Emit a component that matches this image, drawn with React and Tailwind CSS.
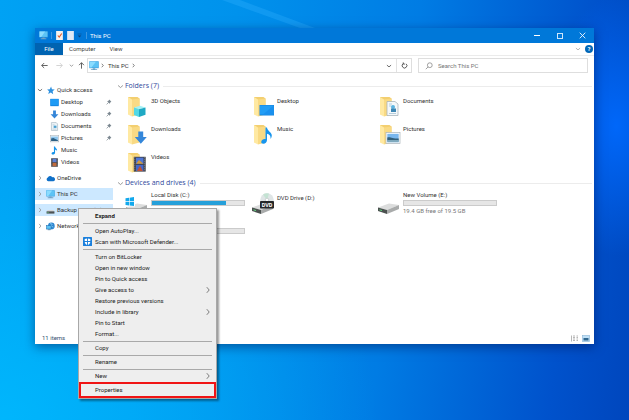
import React, { useState } from "react";

const quickAccess = [
  { name: "Desktop", icon: "desktop", pinned: true },
  { name: "Downloads", icon: "downloads", pinned: true },
  { name: "Documents", icon: "documents", pinned: true },
  { name: "Pictures", icon: "pictures", pinned: true },
  { name: "Music", icon: "music", pinned: false },
  { name: "Videos", icon: "videos", pinned: false },
];

const roots = [
  { name: "OneDrive", icon: "onedrive", selected: false },
  { name: "This PC", icon: "pc", selected: true },
  { name: "Backup Drive (F:)", icon: "drive", selected: true },
  { name: "Network", icon: "network", selected: false },
];

const folders = [
  { name: "3D Objects", icon: "objects" },
  { name: "Desktop", icon: "desktop" },
  { name: "Documents", icon: "documents" },
  { name: "Downloads", icon: "downloads" },
  { name: "Music", icon: "music" },
  { name: "Pictures", icon: "pictures" },
  { name: "Videos", icon: "videos" },
];

const drives = [
  { name: "Local Disk (C:)", kind: "system", used: 80 },
  { name: "DVD Drive (D:)", kind: "dvd" },
  { name: "New Volume (E:)", kind: "disk", used: 0, free: "19.4 GB free of 19.5 GB" },
  { name: "Backup Drive (F:)", kind: "disk", used: 0 },
];

// each inner array is a block between two separators
const menuGroups = [
  [{ label: "Expand", bold: true }],
  [{ label: "Open AutoPlay..." }, { label: "Scan with Microsoft Defender...", shield: true }],
  [
    { label: "Turn on BitLocker" },
    { label: "Open in new window" },
    { label: "Pin to Quick access" },
    { label: "Give access to", sub: true },
    { label: "Restore previous versions" },
    { label: "Include in library", sub: true },
    { label: "Pin to Start" },
    { label: "Format..." },
  ],
];

const shortGroups = [{ label: "Copy" }, { label: "Rename" }, { label: "New", sub: true }];

function Chevron({ dir = "right", className = "" }) {
  const d = dir === "right" ? "M3.5 1.5 L6.5 5 L3.5 8.5" : "M1.5 3.5 L5 6.5 L8.5 3.5";
  return (
    <svg viewBox="0 0 10 10" className={"shrink-0 " + className} fill="none" stroke="currentColor" strokeWidth="1.2" aria-hidden="true">
      <path d={d} />
    </svg>
  );
}

function PcIcon({ className }) {
  return (
    <svg viewBox="0 0 16 16" className={className} aria-hidden="true">
      <rect x="0.5" y="0.5" width="15" height="11" fill="#3a9adb" />
      <rect x="1" y="1" width="14" height="9.5" fill="#5cc3f5" />
      <path d="M1 1 H11 L4 10.5 H1 Z" fill="#8adcff" />
      <path d="M6 11.5 H10 V13 H13 V14.5 H3 V13 H6 Z" fill="#6fa3c6" />
    </svg>
  );
}

function SmallIcon({ name }) {
  const cls = "h-[9px] w-[9px] shrink-0";
  if (name === "pc") return <PcIcon className={cls} />;
  return (
    <svg viewBox="0 0 16 16" className={cls} aria-hidden="true">
      {name === "star" && (
        <path d="M9 1 L10.6 5.6 L15.5 6 L11.8 9.2 L12.8 14.5 L8.6 11.6 L4 14.4 L5.4 9.4 L2 6.2 L6.8 5.6 Z" fill="#2f92e0" />
      )}
      {name === "desktop" && (
        <>
          <rect x="0.5" y="1.5" width="15" height="13" fill="#1280dc" />
          <rect x="1" y="2" width="14" height="11" fill="#1e9bf5" />
        </>
      )}
      {name === "downloads" && <path d="M5.5 1 H10.5 V7.5 H15 L8 15 L1 7.5 H5.5 Z" fill="#3586d8" />}
      {name === "documents" && (
        <>
          <path d="M2.5 1 H11 L13.5 3.5 V15 H2.5 Z" fill="#eef4f8" stroke="#9aabb8" />
          <path d="M4.5 5 H8 M4.5 12.5 H11.5" stroke="#9db9cc" />
          <rect x="6.5" y="6.5" width="5" height="4" fill="#4aa0d0" />
        </>
      )}
      {name === "pictures" && (
        <>
          <rect x="0.5" y="3" width="15" height="11" fill="#f4f7f9" stroke="#a7b1b8" />
          <rect x="2" y="4.5" width="12" height="8" fill="#8cc5ee" />
          <path d="M2 8 L6 7 L14 11 V12.5 H2 Z" fill="#2c5f83" />
        </>
      )}
      {name === "music" && (
        <path d="M7 1 H9 C9 4 13.5 4.5 12.5 9.5 C12 7.5 10.5 6.8 9 6.8 V12 C9 14 7.2 15.3 5.3 15.3 C3.6 15.3 2.6 14.4 2.8 13 C3 11.4 5 10.3 7 10.7 Z" fill="#1593ea" />
      )}
      {name === "videos" && (
        <>
          <rect x="2" y="0.5" width="12" height="15" fill="#3d3f45" />
          <rect x="4.5" y="1.5" width="7" height="6" fill="#5d82d8" />
          <rect x="4.5" y="8.5" width="7" height="6" fill="#c06a3c" />
          <path d="M3.2 1 V15 M12.8 1 V15" stroke="#a9adb4" strokeWidth="1" strokeDasharray="1.2 1.2" />
        </>
      )}
      {name === "onedrive" && (
        <path d="M4 13 A3.6 3.6 0 0 1 3.2 6.2 A4.5 4.5 0 0 1 11 5.6 A3.8 3.8 0 0 1 13.2 13 Z" fill="#1070c8" />
      )}
      {name === "drive" && (
        <>
          <path d="M3 7 H13 L15 10 H1 Z" fill="#d5d8da" />
          <rect x="1" y="9.5" width="14" height="4" fill="#4c5254" />
          <rect x="2" y="11" width="3" height="1" fill="#5fcf7c" />
        </>
      )}
      {name === "network" && (
        <>
          <circle cx="9.5" cy="7" r="6" fill="#2e86d0" />
          <path d="M7 2.5 L11 4 L9 7 L13 9" stroke="#8fd0f5" strokeWidth="1.4" fill="none" />
          <rect x="1" y="6.5" width="8" height="6" fill="#5cc3f5" stroke="#1e6fb2" />
          <rect x="3" y="13" width="5" height="1.5" fill="#4a7ea8" />
        </>
      )}
    </svg>
  );
}

function FolderIcon({ name }) {
  return (
    <svg viewBox="0 0 26 22" className="h-[22px] w-[26px] shrink-0" aria-hidden="true">
      <path d="M3 1 H12.5 L14.5 2.5 V18 L7 19 L3 18 Z" fill="#f3cf70" />
      <path d="M3 1 L7 3.5 V20.5 L3 18.5 Z" fill="#ffe9a2" />
      <path d="M7 3.5 L14.5 2.5 V18.5 L7 20.5 Z" fill="#f9da84" />
      {name === "objects" && (
        <>
          <path d="M9 11.5 L15 9.8 L20.5 11.5 L14 13.2 Z" fill="#a5f1f5" />
          <path d="M9 11.5 L14 13.2 V21 L9 19 Z" fill="#53d9e6" />
          <path d="M14 13.2 L20.5 11.5 V18.8 L14 21 Z" fill="#1fa9c4" />
        </>
      )}
      {name === "desktop" && (
        <>
          <rect x="8.5" y="9" width="14.5" height="10.5" fill="#1683dd" />
          <rect x="9" y="9.5" width="13.5" height="9" fill="#229df5" />
          <path d="M22.5 9.5 V18.5 H12 Z" fill="#1a90ee" />
        </>
      )}
      {name === "documents" && (
        <>
          <path d="M10 5.5 H18 L21 8 V19.5 H10 Z" fill="#f4f8fa" stroke="#a1adb5" strokeWidth="0.7" />
          <path d="M12 8 H15 M12 10 H14 M12 17.5 H19" stroke="#a6c3d6" strokeWidth="0.8" />
          <circle cx="16" cy="11" r="2" fill="#5bb4e0" />
          <rect x="14" y="12.5" width="5" height="3.5" fill="#3d86b4" />
        </>
      )}
      {name === "downloads" && <path d="M13.3 7.5 H18.2 V13 H21.8 L15.8 19.8 L9.8 13 H13.3 Z" fill="#3487da" />}
      {name === "music" && (
        <path d="M14.5 3.5 H16 C16.3 7 21 8.5 20.8 11.5 C20.7 13 20.2 14 19.5 15 C20 11.5 18 10.2 16 9.8 V16 C16 18.3 14.2 19.8 12.5 19.8 C10.9 19.8 10 18.8 10.3 17.5 C10.6 15.8 12.6 14.7 14.5 15.1 Z" fill="#1795ee" />
      )}
      {name === "pictures" && (
        <>
          <rect x="9" y="8.5" width="14" height="11" fill="#fff" stroke="#a7b1b8" strokeWidth="0.7" />
          <rect x="10.3" y="9.8" width="11.4" height="8.4" fill="#79b7ee" />
          <path d="M10.3 13.5 C13 12.3 15 14.4 21.7 14.6 V16.4 H10.3 Z" fill="#33607a" />
          <rect x="10.3" y="16" width="11.4" height="2.2" fill="#7fa9bd" />
        </>
      )}
      {name === "videos" && (
        <>
          <rect x="8.8" y="4.8" width="11.9" height="14.8" fill="#3b3d44" />
          <rect x="11" y="5.6" width="7.5" height="6.2" fill="#4f76d6" />
          <path d="M11 11.8 L14 8 L18.5 11.8 Z" fill="#d39a3a" />
          <rect x="11" y="12.8" width="7.5" height="6.2" fill="#4468c9" />
          <path d="M12 19 L15 13.8 L17.8 19 Z" fill="#c4512f" />
          <path d="M9.8 5.3 V19.3 M19.7 5.3 V19.3" stroke="#a9adb4" strokeWidth="0.8" strokeDasharray="1 1" />
        </>
      )}
    </svg>
  );
}

function DriveIcon({ kind }) {
  return (
    <svg viewBox="0 0 26 24" className="h-[24px] w-[26px] shrink-0" aria-hidden="true">
      {kind === "dvd" && (
        <>
          <circle cx="16" cy="9" r="6.8" fill="#dfe5e6" />
          <path d="M16 9 L12 3.5 A6.8 6.8 0 0 1 18 2.5 Z" fill="#c4e3d3" />
          <circle cx="16" cy="9" r="1.8" fill="#fff" stroke="#b5bcbe" strokeWidth="0.6" />
        </>
      )}
      <path d="M1 16.5 L12 12.5 L22 14 L10 19 Z" fill="#dcdddd" />
      <path d="M1 16.5 L10 19 V23 L1 20 Z" fill="#4b514f" />
      <path d="M10 19 L22 14 V18 L10 23 Z" fill="#a9abab" />
      <path d="M2.5 18.8 L5 19.6" stroke="#5fcf7c" strokeWidth="1" />
      {kind === "system" && (
        <>
          <rect x="0" y="5.5" width="10" height="10" fill="#fff" />
          <path d="M0.5 7.3 L4 6.8 V10.3 H0.5 Z M4.6 6.7 L9 6 V10.3 H4.6 Z M0.5 10.9 H4 V14.4 L0.5 13.9 Z M4.6 10.9 H9 V15.1 L4.6 14.5 Z" fill="#12a8ec" />
        </>
      )}
      {kind === "dvd" && (
        <>
          <rect x="9" y="10" width="14" height="7.5" rx="0.8" fill="#25282a" />
          <text x="16" y="15.8" textAnchor="middle" fontSize="5.5" fontWeight="700" fill="#fff">DVD</text>
        </>
      )}
    </svg>
  );
}

function Pin() {
  return (
    <svg viewBox="0 0 10 10" className="h-[6px] w-[6px] shrink-0 text-[#7b8790]" aria-hidden="true">
      <path d="M5.5 1 L9 4.5 L7.8 5 L6 8 L2 4 L5 2.2 Z" fill="currentColor" />
      <path d="M3.8 6.2 L1 9" stroke="currentColor" strokeWidth="1.2" />
    </svg>
  );
}

function TitleBar() {
  return (
    <header className="flex h-[15px] items-center bg-[#0078d9] pl-1 text-white">
      <PcIcon className="h-[9px] w-[9px]" />
      <span className="ml-[3px] h-[7px] w-px bg-[#3d97e0]" />
      <svg viewBox="0 0 12 16" className="ml-1 h-[9px] w-[7px]" aria-hidden="true">
        <rect width="12" height="16" fill="#f5f1ee" />
        <path d="M3 8 L5.5 11 L10 4.5" stroke="#e0592a" strokeWidth="2" fill="none" />
      </svg>
      <svg viewBox="0 0 12 16" className="ml-1 h-[9px] w-[7px]" aria-hidden="true">
        <path d="M0 0 H12 V16 H0 Z" fill="#dfe9f5" />
      </svg>
      <svg viewBox="0 0 10 10" className="ml-[3px] h-[5px] w-[5px] text-[#0b447c]" aria-hidden="true">
        <path d="M1 2 H9" stroke="currentColor" />
        <path d="M1.5 5 H8.5 L5 9 Z" fill="currentColor" />
      </svg>
      <span className="ml-1 h-[7px] w-px bg-[#3d97e0]" />
      <h1 className="ml-[3px]">This PC</h1>
      <div className="ml-auto flex">
        <button aria-label="Minimize" className="flex h-[15px] w-[23px] items-center justify-center">
          <span className="h-px w-[6px] bg-white" />
        </button>
        <button aria-label="Maximize" className="flex h-[15px] w-[23px] items-center justify-center">
          <span className="h-[6px] w-[6px] border border-[#cfe6fa]" />
        </button>
        <button aria-label="Close" className="flex h-[15px] w-[23px] items-center justify-center">
          <svg viewBox="0 0 10 10" className="h-[7px] w-[7px]" stroke="currentColor" strokeWidth="1.2">
            <path d="M1 1 L9 9 M9 1 L1 9" />
          </svg>
        </button>
      </div>
    </header>
  );
}

function Toolbar({ query, setQuery }) {
  return (
    <div className="flex items-center border-t border-[#ebebeb] pt-[2px] pr-[6px] pl-[2px] text-[#444]">
      <button aria-label="Back" className="flex w-[15px] justify-center">
        <svg viewBox="0 0 10 10" className="h-[7px] w-[7px]" fill="none" stroke="#555" strokeWidth="1.3">
          <path d="M9.5 5 H1 M4.5 1.5 L1 5 L4.5 8.5" />
        </svg>
      </button>
      <button aria-label="Forward" className="flex w-[15px] justify-center">
        <svg viewBox="0 0 10 10" className="h-[7px] w-[7px]" fill="none" stroke="#cfcfcf" strokeWidth="1.3">
          <path d="M0.5 5 H9 M5.5 1.5 L9 5 L5.5 8.5" />
        </svg>
      </button>
      <button aria-label="Recent locations" className="flex w-[8px] justify-center">
        <Chevron dir="down" className="h-[5px] w-[5px] text-[#666]" />
      </button>
      <button aria-label="Up" className="flex w-[12px] justify-center">
        <svg viewBox="0 0 10 10" className="h-[7px] w-[7px]" fill="none" stroke="#555" strokeWidth="1.3">
          <path d="M5 9.5 V1 M1.5 4.5 L5 1 L8.5 4.5" />
        </svg>
      </button>
      <div className="flex h-[15px] flex-1 items-center border border-[#dedede] pl-px text-[#333]">
        <PcIcon className="h-[10px] w-[10px]" />
        <Chevron className="ml-px h-[5px] w-[5px]" />
        <a href="#this-pc" className="ml-[3px]">This PC</a>
        <Chevron className="ml-[2px] h-[5px] w-[5px]" />
        <button aria-label="Previous locations" className="ml-auto flex w-[14px] justify-center">
          <Chevron dir="down" className="h-[6px] w-[6px]" />
        </button>
        <button aria-label="Refresh" className="flex h-full w-[15px] items-center justify-center border-l border-[#e2e2e2]">
          <svg viewBox="0 0 10 10" className="h-[7px] w-[7px]" fill="none" stroke="#444" strokeWidth="1.2">
            <path d="M7.2 2.6 A3.4 3.4 0 1 1 3.4 2.2 M3.2 0.6 V3 H5.6" />
          </svg>
        </button>
      </div>
      <label className="ml-[6px] flex h-[15px] w-[170px] items-center border border-[#dedede] pl-[6px]">
        <svg viewBox="0 0 10 10" className="h-[8px] w-[8px] shrink-0" fill="none" stroke="#8a8a8a" strokeWidth="1">
          <circle cx="6" cy="4" r="3" />
          <path d="M3.8 6.2 L1 9" />
        </svg>
        <input
          aria-label="Search This PC"
          placeholder="Search This PC"
          value={query}
          onChange={(e) => setQuery(e.target.value)}
          className="ml-[5px] min-w-0 flex-1 bg-transparent outline-none placeholder:text-[#757575]"
        />
      </label>
    </div>
  );
}

function Sidebar() {
  return (
    <nav className="w-[78px] shrink-0 pt-[9px] text-[#333]">
      <a href="#quick" className="flex h-[12px] items-center pl-[2px] whitespace-nowrap">
        <Chevron dir="down" className="h-[6px] w-[6px] text-[#444]" />
        <span className="ml-[3px] flex items-center gap-[2px]">
          <SmallIcon name="star" />
          Quick access
        </span>
      </a>
      {quickAccess.map((item) => (
        <a key={item.name} href={"#" + item.icon} className="flex h-[12px] items-center gap-[2px] pr-[1px] pl-[15px]">
          <SmallIcon name={item.icon} />
          <span className="flex-1">{item.name}</span>
          {item.pinned && <Pin />}
        </a>
      ))}
      <div className="mt-1 flex flex-col gap-1">
        {roots.map((item) => (
          <a
            key={item.name}
            href={"#" + item.icon}
            className={
              "flex h-[12px] items-center overflow-hidden pl-[2px] whitespace-nowrap " + (item.selected ? "bg-[#cce8ff]" : "")
            }
          >
            <Chevron className="h-[6px] w-[6px] text-[#8a8a8a]" />
            <span className="ml-[3px] flex items-center gap-[2px]">
              <SmallIcon name={item.icon} />
              {item.name}
            </span>
          </a>
        ))}
      </div>
    </nav>
  );
}

function SectionTitle({ children }) {
  return (
    <div className="flex h-[10px] items-center pl-1 text-[#2f4a9c]">
      <Chevron dir="down" className="h-[7px] w-[7px] text-[#888]" />
      <h2 className="ml-px font-['Open_Sans','Noto_Sans',sans-serif] text-[7px] leading-[10px]">{children}</h2>
      <span className="ml-1 h-px flex-1 bg-[#ececec]" />
    </div>
  );
}

function Usage({ value }) {
  return (
    <div className="my-px h-[6px] w-[94px] border border-[#cbcbcb] bg-[#e6e6e6]">
      <div className="h-full bg-[#26a0da]" style={{ width: value + "%" }} />
    </div>
  );
}

function ContextMenu() {
  const row = "flex w-full items-center pr-1 text-left hover:bg-white";
  return (
    <div className="absolute top-[180px] left-[43px] w-[139px] border border-[#a8a8a8] bg-[#eeeeee] pt-px text-[#222] shadow-[2px_2px_2px_rgba(0,0,0,0.4)]">
      {menuGroups.map((group, i) => (
        <div key={i}>
          {group.map((item) => (
            <button key={item.label} className={row + " h-[11px] " + (item.bold ? "font-bold" : "")}>
              <span className="flex w-[16px] shrink-0 pl-1">
                {item.shield && (
                  <svg viewBox="0 0 16 16" className="h-[9px] w-[9px]" aria-hidden="true">
                    <rect width="16" height="16" rx="1" fill="#1a7fdc" />
                    <path d="M3 3.5 L7.2 2.5 V7.2 H3 Z M8.8 2.5 L13 3.5 V7.2 H8.8 Z M3 8.8 H7.2 V14 C5 12.8 3.4 11.5 3 8.8 Z M8.8 8.8 H13 C12.6 11.5 11 12.8 8.8 14 Z" fill="#fff" />
                  </svg>
                )}
              </span>
              <span className="flex-1">{item.label}</span>
              {item.sub && <Chevron className="h-[8px] w-[8px] text-[#777]" />}
            </button>
          ))}
          <div className="mx-1 flex h-1 items-center">
            <hr className="w-full border-[#a9a9a9]" />
          </div>
        </div>
      ))}
      {shortGroups.map((item, i) => (
        <div key={item.label}>
          {i > 0 && (
            <div className="mx-1 flex h-1 items-center">
              <hr className="w-full border-[#a9a9a9]" />
            </div>
          )}
          <button className={row + " h-[10px] pl-[16px]"}>
            <span className="flex-1">{item.label}</span>
            {item.sub && <Chevron className="h-[8px] w-[8px] text-[#777]" />}
          </button>
        </div>
      ))}
      <button className={row + " mt-px h-[16px] border-2 border-[#f01414] pl-[14px]"}>Properties</button>
    </div>
  );
}

export default function App() {
  const [query, setQuery] = useState("");

  return (
    <div className="relative flex min-h-screen flex-col overflow-hidden bg-[radial-gradient(ellipse_70px_130px_at_98%_30%,rgba(0,106,255,0.9),transparent),radial-gradient(ellipse_60%_70%_at_0%_100%,rgba(0,188,255,0.8),transparent),linear-gradient(97deg,#00a2f4_0%,#0092ec_35%,#007ce4_62%,#0052cc_88%,#0046bd_100%)] px-[35px] pt-7 pb-[76px] font-[Roboto,'Open_Sans',sans-serif] text-[6px] leading-[8px]">
      <svg viewBox="0 0 629 28" className="absolute top-0 left-0 h-7 w-full" preserveAspectRatio="none" aria-hidden="true">
        <path d="M222 0 L240 0 L315 28 L300 28 Z" fill="#35b4ff" opacity="0.3" />
      </svg>
      <main className="relative flex flex-1 flex-col bg-white shadow-[0_3px_10px_rgba(0,20,80,0.5)]">
        <TitleBar />
        <div className="flex h-[12px] items-center text-[#444]">
          <button className="h-full w-[28px] bg-[#0063b1] text-white">File</button>
          <button className="ml-[6px]">Computer</button>
          <button className="ml-[14px]">View</button>
          <button aria-label="Expand the ribbon" className="ml-auto">
            <Chevron dir="down" className="h-[6px] w-[6px] text-[#999]" />
          </button>
          <button aria-label="Help" className="mr-px ml-1 h-[8px] w-[8px] rounded-full bg-[#0067b8] font-bold text-white">?</button>
        </div>
        <Toolbar query={query} setQuery={setQuery} />
        <div className="flex flex-1 pt-[2px]">
          <Sidebar />
          <div className="min-w-0 flex-1 pt-[6px] pr-[2px] text-[#333]">
            <SectionTitle>Folders (7)</SectionTitle>
            <ul className="mt-[5px] grid grid-cols-[repeat(3,126px)] gap-y-2 pl-3">
              {folders.map((f) => (
                <li key={f.name} className="flex h-[20px]">
                  <FolderIcon name={f.icon} />
                  <span className="pt-px">{f.name}</span>
                </li>
              ))}
            </ul>
            <div className="mt-[6px]">
              <SectionTitle>Devices and drives (4)</SectionTitle>
            </div>
            <ul className="mt-[3px] grid grid-cols-[repeat(3,126px)] gap-y-1 pl-3">
              {drives.map((d) => (
                <li key={d.name} className="flex h-[24px]">
                  <DriveIcon kind={d.kind} />
                  {d.kind === "dvd" ? (
                    <span className="pt-[3px]">{d.name}</span>
                  ) : (
                    <div className="whitespace-nowrap">
                      {d.name}
                      <Usage value={d.used} />
                      <span className="block text-[#777]">{d.free}</span>
                    </div>
                  )}
                </li>
              ))}
            </ul>
          </div>
        </div>
        <footer className="flex h-[12px] items-center pr-1 pl-[7px] text-[#34506e]">
          11 items
          <button aria-label="Details view" className="ml-auto">
            <svg viewBox="0 0 16 14" className="h-[7px] w-[8px]" stroke="#9a9a9a" strokeWidth="1.4">
              <path d="M1 1 V13 M4 2 H8 M4 5 H8 M4 8 H8 M4 11 H8 M11 2 H14 M11 5 H14 M11 8 H14 M11 11 H14" />
            </svg>
          </button>
          <button aria-label="Large icons view" className="ml-[3px] bg-[#cce8ff]">
            <svg viewBox="0 0 16 14" className="h-[7px] w-[8px]">
              <rect x="1" y="1" width="14" height="12" fill="#bfe0f7" stroke="#8fb4cf" />
              <path d="M3 6 H13 V11 H3 Z" fill="#2f678f" />
            </svg>
          </button>
        </footer>
        <ContextMenu />
      </main>
    </div>
  );
}
